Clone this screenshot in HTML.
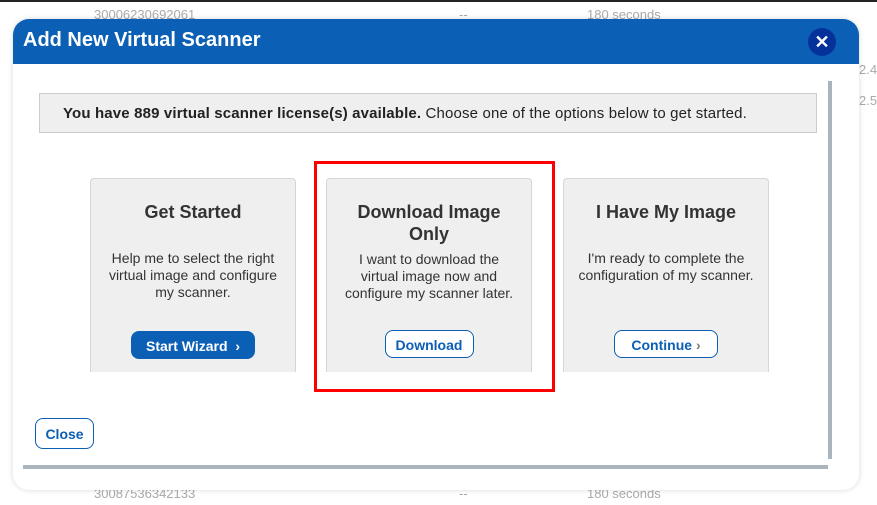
<!DOCTYPE html><html><head><style>
body{margin:0;width:877px;height:505px;background:#fff;font-family:"Liberation Sans",sans-serif;position:relative;overflow:hidden}
.bg{position:absolute;color:#aaa;font-size:13px}
.topbar{position:absolute;left:0;top:0;width:877px;height:2px;background:#222}
.dlg{position:absolute;left:13px;top:19px;width:846px;height:471px;background:#fff;border-radius:16px;box-shadow:0 0 6px rgba(0,0,0,.15);overflow:hidden}
.hd{height:45px;background:#0b5fb4;color:#fff;font-weight:bold;font-size:20px;line-height:43px;padding-left:10px}
.x{position:absolute;left:795px;top:9px;width:28px;height:28px;border-radius:50%;background:#05329a;color:#fff;text-align:center;line-height:28px;font-size:18px;font-weight:bold}
.info{position:absolute;left:26px;top:74px;height:40px;background:#efefef;border:1px solid #ccc;font-size:15px;letter-spacing:0.15px;line-height:40px;padding-left:23px;color:#222;box-sizing:border-box;width:778px}
.card{position:absolute;top:159px;width:204px;height:193px;background:#efefef;border:1px solid #d6d6d6;border-bottom:none;border-radius:4px 4px 0 0;text-align:center;color:#333}
.card h3{margin:22px 0 0;font-size:18px;line-height:22px;color:#333}
.card p{font-size:14px;line-height:17px;margin:27px 14px 0}
.btn{position:absolute;top:151px;left:0;right:0;margin:auto;height:28px;border:1px solid #0b5fb4;border-radius:8px;background:#fff;color:#0b5fb4;font-weight:bold;font-size:14px;line-height:28px;box-sizing:border-box;text-align:center}
.red{position:absolute;left:301px;top:142px;height:231px;border:3px solid #f00;box-sizing:border-box;width:241px}
.vs{position:absolute;left:815px;top:62px;width:4px;height:378px;background:#aab4bc}
.hs{position:absolute;left:10px;top:446px;width:805px;height:4px;background:#aab4bc}
</style></head><body>
<div class="topbar"></div>
<div class="bg" style="left:94px;top:7px">30006230692061</div>
<div class="bg" style="left:459px;top:7px">--</div>
<div class="bg" style="left:587px;top:7px">180 seconds</div>
<div class="bg" style="left:859px;top:62px">2.4</div>
<div class="bg" style="left:859px;top:93px">2.5</div>
<div class="bg" style="left:94px;top:486px">30087536342133</div>
<div class="bg" style="left:459px;top:486px">--</div>
<div class="bg" style="left:587px;top:486px">180 seconds</div>
<div class="dlg">
<div class="hd">Add New Virtual Scanner</div>
<div class="x">✕</div>
<div class="info"><b>You have 889 virtual scanner license(s) available.</b> Choose one of the options below to get started.</div>
<div class="card" style="left:77px"><h3>Get Started</h3><p>Help me to select the right virtual image and configure my scanner.</p>
<div class="btn" style="width:124px;background:#0b5fb4;color:#fff;top:152px">Start Wizard &nbsp;›</div></div>
<div class="card" style="left:313px"><h3 style="margin:22px 20px 0">Download Image Only</h3><p style="margin-top:6px">I want to download the virtual image now and configure my scanner later.</p>
<div class="btn" style="width:89px">Download</div></div>
<div class="card" style="left:550px"><h3>I Have My Image</h3><p>I'm ready to complete the configuration of my scanner.</p>
<div class="btn" style="width:104px">Continue <span style="color:#777">›</span></div></div>
<div class="red"></div>
<div class="btn" style="left:22px;right:auto;top:399px;width:59px;height:31px;line-height:31px">Close</div>
<div class="vs"></div><div class="hs"></div>
</div>
</body></html>
